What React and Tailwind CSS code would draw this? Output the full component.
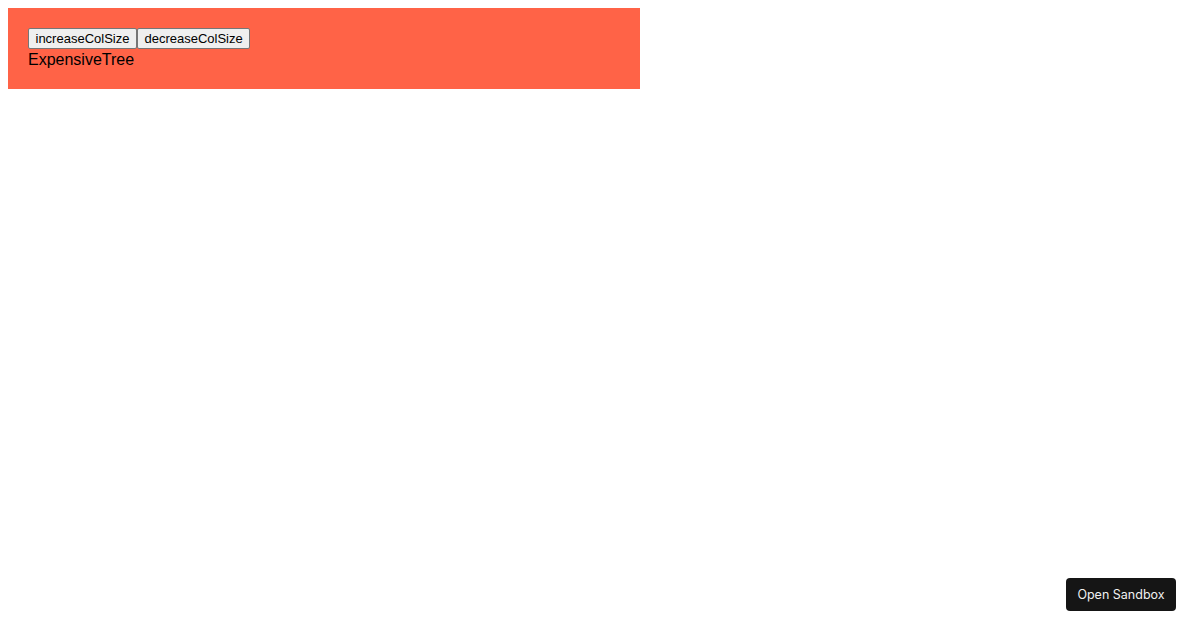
import React, { useState } from 'react';

export default function App() {
    const [colSize, setColSize] = useState(1);

    return (
        <div className="min-h-[630px] bg-white p-2 font-['Liberation_Sans',Arial,sans-serif] text-black">
            <div className="w-[632px] bg-[#ff6347] px-5 pt-5 pb-[19px]">
                <div className="flex">
                    <button
                        onClick={() => setColSize(colSize + 1)}
                        className="h-[21px] border border-[#767676] bg-[#efefef] px-[6.5px] text-[13px] leading-[17px] rounded-[2px]"
                    >
                        increaseColSize
                    </button>
                    <button
                        onClick={() => setColSize(colSize - 1)}
                        className="h-[21px] border border-[#767676] bg-[#efefef] px-[6.5px] text-[13px] leading-[17px] rounded-[2px]"
                    >
                        decreaseColSize
                    </button>
                </div>
                <div className="pt-[1px] text-base leading-5">ExpensiveTree</div>
            </div>

            <button className="fixed right-6 bottom-[19px] h-[33px] w-[110px] rounded-[4px] bg-[#151515] pt-[2px] text-[12.5px] text-[#f0f0f0] font-['Inter',sans-serif]">
                Open Sandbox
            </button>
        </div>
    );
}
